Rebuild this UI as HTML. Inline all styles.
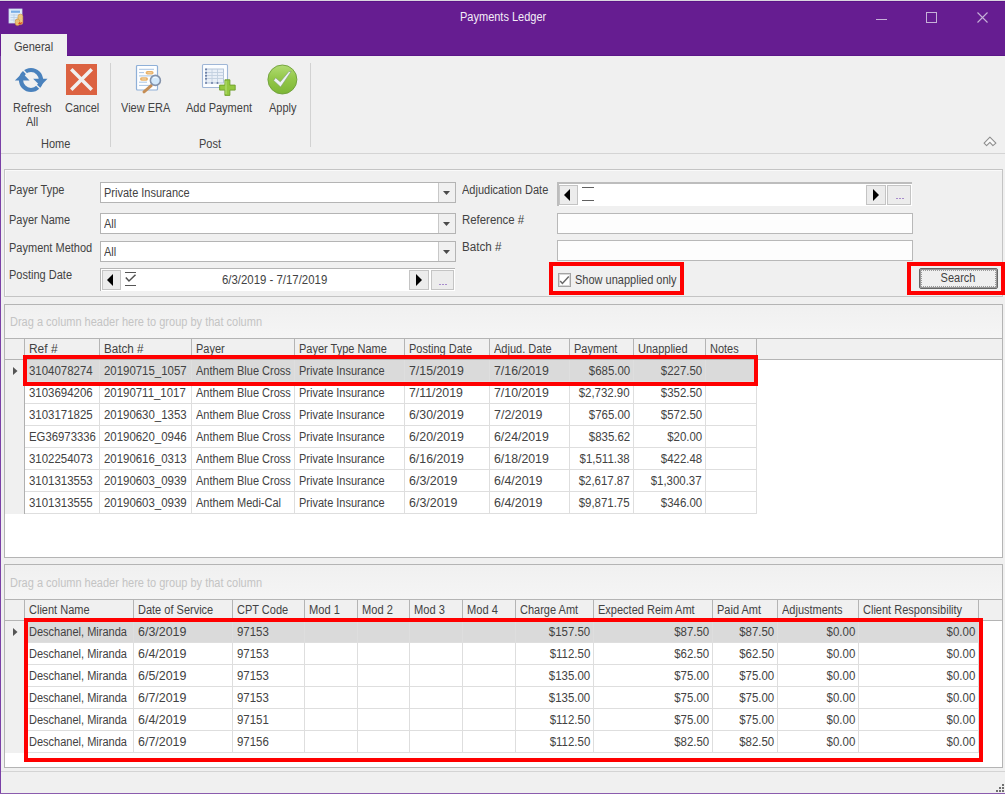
<!DOCTYPE html>
<html><head><meta charset="utf-8"><style>
html,body{margin:0;padding:0;width:1005px;height:794px;overflow:hidden;background:#f0f0f0}
body{position:relative;font-family:"Liberation Sans",sans-serif;font-size:11px}
body>div,body>svg{position:absolute}
.t{white-space:nowrap}
</style></head><body>
<div style="left:0px;top:0px;width:1005px;height:1px;background:#d9d6df"></div>
<div style="left:0px;top:1px;width:1005px;height:55px;background:#661d91"></div>
<div style="left:0px;top:1px;width:1005px;height:1px;background:#5b1486"></div>
<svg style="left:8px;top:8px" width="17" height="19" viewBox="0 0 17 19">
<rect x="1" y="1" width="13" height="14" fill="#e2eefa" stroke="#c9d9ec" stroke-width="0.8"/>
<rect x="3" y="2.6" width="9" height="2.2" fill="#78ade6"/>
<g stroke="#b9cde4" stroke-width="0.8"><line x1="2.5" y1="7" x2="12.5" y2="7"/><line x1="2.5" y1="9.5" x2="12.5" y2="9.5"/><line x1="2.5" y1="12" x2="12.5" y2="12"/><line x1="6" y1="6" x2="6" y2="14"/></g>
<rect x="10" y="6.2" width="4.8" height="10.4" rx="2.2" fill="#f2c67c" stroke="#c99445" stroke-width="0.6"/>
<rect x="7.3" y="11" width="4.4" height="6.6" rx="2" fill="#efbd6c" stroke="#c08a3a" stroke-width="0.6"/>
<g stroke="#d9c08a" stroke-width="0.5"><line x1="10.3" y1="9" x2="14.5" y2="9"/><line x1="10.3" y1="11.5" x2="14.5" y2="11.5"/><line x1="7.6" y1="13.5" x2="11.4" y2="13.5"/></g>
<path d="M10.5 15.8 l1.2 -1 l1 0.8 l1.5 -1.2" stroke="#e04a20" stroke-width="1.1" fill="none"/>
</svg>
<div class="t" style="left:460px;top:11px;font-size:12.5px;line-height:12.5px;transform:scaleX(0.88032);transform-origin:0 0;color:#f4eef8">Payments Ledger</div>
<div style="left:876px;top:19px;width:11px;height:1px;background:#c6b2d8"></div>
<div style="left:926px;top:12px;width:11px;height:11px;border:1px solid #c6b2d8;box-sizing:border-box"></div>
<svg style="left:977px;top:12px" width="11" height="11" viewBox="0 0 11 11"><path d="M0.5 0.5 L10.5 10.5 M10.5 0.5 L0.5 10.5" stroke="#c6b2d8" stroke-width="1.1"/></svg>
<div style="left:67px;top:55px;width:938px;height:1px;background:#5b1688"></div>
<div style="left:1px;top:34px;width:66px;height:22px;background:#f0f0f0"></div>
<div class="t" style="left:14px;top:41px;font-size:12.5px;line-height:12.5px;transform:scaleX(0.88032);transform-origin:0 0;color:#424242">General</div>
<div style="left:1px;top:56px;width:1004px;height:98px;background:#f0f0f0"></div>
<div style="left:1px;top:153px;width:1004px;height:1px;background:#d4d4d4"></div>
<div style="left:110px;top:63px;width:1px;height:84px;background:#d2d2d2"></div>
<div style="left:310px;top:63px;width:1px;height:84px;background:#d2d2d2"></div>
<svg style="left:14px;top:66px" width="34" height="28" viewBox="0 0 34 28">
<path d="M7 14 A10 10 0 0 1 27 14" stroke="#4a82bd" stroke-width="4.2" fill="none"/>
<path d="M7 14 A10 10 0 0 0 27 14" stroke="#4a82bd" stroke-width="4.2" fill="none"/>
<line x1="8.6" y1="3.6" x2="17" y2="12.6" stroke="#f0f0f0" stroke-width="1.4"/>
<line x1="17.5" y1="14.5" x2="26.5" y2="23" stroke="#f0f0f0" stroke-width="1.4"/>
<path d="M0.9 14.5 L8.4 7 L15.6 14.5 Z" fill="#4a82bd"/>
<path d="M19.1 12.7 L33.5 12.7 L26.6 19.9 Z" fill="#4a82bd"/>
</svg>
<div style="left:66px;top:64px;width:31px;height:31px;background:#dc6241"></div>
<svg style="left:66px;top:64px" width="31" height="31" viewBox="0 0 31 31"><path d="M6.5 6.5 L24.5 24.5 M24.5 6.5 L6.5 24.5" stroke="#f0f0f0" stroke-width="3.5" stroke-linecap="square"/></svg>
<div class="t" style="left:13px;top:102px;font-size:12.5px;line-height:12.5px;transform:scaleX(0.88032);transform-origin:0 0;color:#424242">Refresh</div>
<div class="t" style="left:26px;top:116px;font-size:12.5px;line-height:12.5px;transform:scaleX(0.8803200000000001);transform-origin:0 0;color:#424242">All</div>
<div class="t" style="left:65px;top:102px;font-size:12.5px;line-height:12.5px;transform:scaleX(0.8803200000000001);transform-origin:0 0;color:#424242">Cancel</div>
<div class="t" style="left:41px;top:138px;font-size:12.5px;line-height:12.5px;transform:scaleX(0.8803200000000001);transform-origin:0 0;color:#424242">Home</div>
<svg style="left:134px;top:63px" width="32" height="32" viewBox="0 0 32 32">
<rect x="2.5" y="2.5" width="21" height="24.5" rx="1" fill="#fdfeff" stroke="#8fb0d8" stroke-width="1.2"/>
<g stroke="#a9c4e4" stroke-width="1"><line x1="5" y1="6.3" x2="20" y2="6.3"/><line x1="5" y1="9.6" x2="10" y2="9.6"/><line x1="5" y1="12.9" x2="20" y2="12.9"/><line x1="5" y1="19.2" x2="13" y2="19.2"/><line x1="5" y1="22.4" x2="17" y2="22.4"/></g>
<rect x="11.6" y="8" width="8" height="3.6" rx="1.8" fill="#e9b26a"/>
<rect x="6" y="14.3" width="8" height="3.5" rx="1.7" fill="#e9b26a"/>
<g stroke="#f6e2c0" stroke-width="0.8"><line x1="13.5" y1="9.8" x2="17.8" y2="9.8"/><line x1="7.8" y1="16" x2="12" y2="16"/></g>
<line x1="17.2" y1="22.7" x2="10" y2="28.8" stroke="#c58d55" stroke-width="3" stroke-linecap="round"/>
<circle cx="21.4" cy="17.4" r="5" fill="#d2e8fb" stroke="#8492aa" stroke-width="1.6"/>
<path d="M19 15 Q21 13.5 23.5 15" stroke="#f4faff" stroke-width="1" fill="none"/>
</svg>
<div class="t" style="left:121px;top:102px;font-size:12.5px;line-height:12.5px;transform:scaleX(0.8803200000000001);transform-origin:0 0;color:#424242">View ERA</div>
<svg style="left:201px;top:63px" width="36" height="34" viewBox="0 0 36 34">
<rect x="1.5" y="1.5" width="25" height="23" rx="1" fill="#fbfdff" stroke="#9fb6d6" stroke-width="1.1"/>
<rect x="5" y="6" width="17.5" height="14" fill="#e9eff7" stroke="#aebfd6" stroke-width="0.9"/>
<g stroke="#c2cfdf" stroke-width="0.9"><line x1="5" y1="9.5" x2="22.5" y2="9.5"/><line x1="5" y1="12.5" x2="22.5" y2="12.5"/><line x1="5" y1="15.5" x2="22.5" y2="15.5"/><line x1="11" y1="6" x2="11" y2="20"/><line x1="16.5" y1="6" x2="16.5" y2="20"/></g>
<g fill="#5a6f9a"><rect x="4.2" y="5.5" width="1.6" height="1.6"/><rect x="4.2" y="9" width="1.6" height="1.6"/><rect x="4.2" y="12" width="1.6" height="1.6"/><rect x="4.2" y="15" width="1.6" height="1.6"/><rect x="4.2" y="19.2" width="1.6" height="1.6"/><rect x="10.2" y="19.2" width="1.6" height="1.6"/><rect x="15.7" y="19.2" width="1.6" height="1.6"/></g>
<path d="M23.9 16.8 h5 v5.3 h5.3 v5 h-5.3 v5.3 h-5 v-5.3 h-5.3 v-5 h5.3 z" fill="#94c840" stroke="#6f9e2c" stroke-width="0.9"/>
<path d="M25 18 v13" stroke="#b8e07a" stroke-width="1"/>
</svg>
<div class="t" style="left:186px;top:102px;font-size:12.5px;line-height:12.5px;transform:scaleX(0.88032);transform-origin:0 0;color:#424242">Add Payment</div>
<svg style="left:266px;top:64px" width="32" height="32" viewBox="0 0 32 32">
<defs><linearGradient id="ga" x1="0" y1="0" x2="0" y2="1"><stop offset="0" stop-color="#b2dc74"/><stop offset="0.45" stop-color="#94c84a"/><stop offset="1" stop-color="#7cb636"/></linearGradient></defs>
<circle cx="16.4" cy="15.5" r="14.5" fill="url(#ga)" stroke="#6e9e3a" stroke-width="0.9"/>
<path d="M7.6 16.4 L14.6 23 L25.2 7.4 L22.8 7.6 L14.3 17.8 L9.6 13.8 Z" fill="#eef2f6" stroke="#7a9a66" stroke-width="0.6" stroke-linejoin="round"/>
</svg>
<div class="t" style="left:269px;top:102px;font-size:12.5px;line-height:12.5px;transform:scaleX(0.8803200000000001);transform-origin:0 0;color:#424242">Apply</div>
<div class="t" style="left:199px;top:138px;font-size:12.5px;line-height:12.5px;transform:scaleX(0.8803200000000001);transform-origin:0 0;color:#424242">Post</div>
<svg style="left:983px;top:136px" width="14" height="11" viewBox="0 0 14 11"><path d="M1.1 7.1 L6.9 1.1 L12.9 7.1 L9.9 9.6 L6.9 6.4 L3.6 9.6 Z" fill="#f8f8f8" stroke="#8e8e8e" stroke-width="1.1" stroke-linejoin="round"/></svg>
<div style="left:1px;top:154px;width:1004px;height:639px;background:#f0f0f0"></div>
<div style="left:0px;top:56px;width:1px;height:737px;background:#7a40a6"></div>
<div style="left:0px;top:793px;width:1005px;height:1px;background:#8b5cae"></div>
<div style="left:4px;top:169px;width:999px;height:128px;border:1px solid #c4c4c4;box-sizing:border-box;box-shadow:inset 1px 1px 0 #fafafa"></div>
<div class="t" style="left:9px;top:184px;font-size:12.5px;line-height:12.5px;transform:scaleX(0.8803200000000001);transform-origin:0 0;color:#424242">Payer Type</div>
<div class="t" style="left:9px;top:214px;font-size:12.5px;line-height:12.5px;transform:scaleX(0.8803200000000001);transform-origin:0 0;color:#424242">Payer Name</div>
<div class="t" style="left:9px;top:242px;font-size:12.5px;line-height:12.5px;transform:scaleX(0.8803200000000001);transform-origin:0 0;color:#424242">Payment Method</div>
<div class="t" style="left:9px;top:269px;font-size:12.5px;line-height:12.5px;transform:scaleX(0.8803200000000001);transform-origin:0 0;color:#424242">Posting Date</div>
<div class="t" style="left:462px;top:184px;font-size:12.5px;line-height:12.5px;transform:scaleX(0.8803200000000001);transform-origin:0 0;color:#424242">Adjudication Date</div>
<div class="t" style="left:462px;top:214px;font-size:12.5px;line-height:12.5px;transform:scaleX(0.9129556117235816);transform-origin:0 0;color:#424242">Reference #</div>
<div class="t" style="left:462px;top:241px;font-size:12.5px;line-height:12.5px;transform:scaleX(0.9327484406047516);transform-origin:0 0;color:#424242">Batch #</div>
<div style="left:100px;top:182px;width:356px;height:21px;background:#fff;border:1px solid #b4b4b4;box-sizing:border-box"></div>
<div style="left:438px;top:183px;width:1px;height:19px;background:#c8c8c8"></div>
<div style="left:439px;top:183px;width:16px;height:19px;background:#f0f0f0"></div>
<svg style="left:443px;top:191px" width="7" height="4" viewBox="0 0 7 4"><path d="M0 0 H7 L3.5 4 Z" fill="#4a4a4a"/></svg>
<div class="t" style="left:104px;top:187px;font-size:12.5px;line-height:12.5px;transform:scaleX(0.88032);transform-origin:0 0;color:#424242">Private Insurance</div>
<div style="left:100px;top:213px;width:356px;height:21px;background:#fff;border:1px solid #b4b4b4;box-sizing:border-box"></div>
<div style="left:438px;top:214px;width:1px;height:19px;background:#c8c8c8"></div>
<div style="left:439px;top:214px;width:16px;height:19px;background:#f0f0f0"></div>
<svg style="left:443px;top:222px" width="7" height="4" viewBox="0 0 7 4"><path d="M0 0 H7 L3.5 4 Z" fill="#4a4a4a"/></svg>
<div class="t" style="left:104px;top:218px;font-size:12.5px;line-height:12.5px;transform:scaleX(0.8803200000000001);transform-origin:0 0;color:#424242">All</div>
<div style="left:100px;top:241px;width:356px;height:21px;background:#fff;border:1px solid #b4b4b4;box-sizing:border-box"></div>
<div style="left:438px;top:242px;width:1px;height:19px;background:#c8c8c8"></div>
<div style="left:439px;top:242px;width:16px;height:19px;background:#f0f0f0"></div>
<svg style="left:443px;top:250px" width="7" height="4" viewBox="0 0 7 4"><path d="M0 0 H7 L3.5 4 Z" fill="#4a4a4a"/></svg>
<div class="t" style="left:104px;top:246px;font-size:12.5px;line-height:12.5px;transform:scaleX(0.8803200000000001);transform-origin:0 0;color:#424242">All</div>
<div style="left:557px;top:213px;width:356px;height:21px;background:#fdfdfd;border:1px solid #b8b8b8;box-sizing:border-box"></div>
<div style="left:557px;top:240px;width:356px;height:21px;background:#fdfdfd;border:1px solid #b8b8b8;box-sizing:border-box"></div>
<div style="left:557px;top:182px;width:355px;height:24px;background:#fff;border-top:2px solid #bdbdbd;border-left:2px solid #bdbdbd;box-sizing:border-box"></div>
<div style="left:559px;top:185px;width:19px;height:20px;background:#ececec;border:1px solid #c4c4c4;box-sizing:border-box"></div>
<svg style="left:564px;top:189px" width="7" height="12" viewBox="0 0 7 12"><path d="M6 0 V12 L0 6 Z" fill="#000"/></svg>
<div style="left:582px;top:187px;width:12px;height:1px;background:#606060"></div>
<div style="left:582px;top:200px;width:12px;height:1px;background:#606060"></div>
<div style="left:866px;top:185px;width:20px;height:20px;background:#ececec;border:1px solid #c4c4c4;box-sizing:border-box"></div>
<svg style="left:872px;top:189px" width="7" height="12" viewBox="0 0 7 12"><path d="M1 0 V12 L7 6 Z" fill="#000"/></svg>
<div style="left:887px;top:185px;width:24px;height:20px;background:#ececec;border:1px solid #c4c4c4;box-sizing:border-box"></div>
<div style="left:896.0px;top:197.5px;width:1.5px;height:1.5px;background:#a88ccc"></div>
<div style="left:899.2px;top:197.5px;width:1.5px;height:1.5px;background:#a88ccc"></div>
<div style="left:902.4px;top:197.5px;width:1.5px;height:1.5px;background:#a88ccc"></div>
<div style="left:100px;top:268px;width:355px;height:23px;background:#fff;border-top:1px solid #b4b4b4;border-left:1px solid #b4b4b4;box-sizing:border-box"></div>
<div style="left:102px;top:270px;width:19px;height:20px;background:#ececec;border:1px solid #c4c4c4;box-sizing:border-box"></div>
<svg style="left:107px;top:274px" width="7" height="12" viewBox="0 0 7 12"><path d="M6 0 V12 L0 6 Z" fill="#000"/></svg>
<div style="left:125px;top:272px;width:11px;height:1px;background:#555"></div>
<svg style="left:125px;top:274px" width="12" height="9" viewBox="0 0 12 9"><path d="M0.8 3.5 L4 7 L10.5 0.8" stroke="#505050" stroke-width="1.5" fill="none"/></svg>
<div style="left:125px;top:285px;width:11px;height:1px;background:#555"></div>
<div class="t" style="left:222px;top:274px;font-size:12.5px;line-height:12.5px;transform:scaleX(0.9119999999999999);transform-origin:0 0;color:#424242">6/3/2019 - 7/17/2019</div>
<div style="left:409px;top:270px;width:20px;height:20px;background:#ececec;border:1px solid #c4c4c4;box-sizing:border-box"></div>
<svg style="left:415px;top:274px" width="7" height="12" viewBox="0 0 7 12"><path d="M1 0 V12 L7 6 Z" fill="#000"/></svg>
<div style="left:431px;top:270px;width:23px;height:20px;background:#ececec;border:1px solid #c4c4c4;box-sizing:border-box"></div>
<div style="left:439.0px;top:283.5px;width:1.5px;height:1.5px;background:#a88ccc"></div>
<div style="left:442.2px;top:283.5px;width:1.5px;height:1.5px;background:#a88ccc"></div>
<div style="left:445.4px;top:283.5px;width:1.5px;height:1.5px;background:#a88ccc"></div>
<div style="left:558px;top:273px;width:13px;height:14px;background:#fff;border:1px solid #a4a4a4;box-sizing:border-box;box-shadow:inset 0 0 0 1px #d8d8d8"></div>
<svg style="left:558px;top:274px" width="13" height="12" viewBox="0 0 13 12"><path d="M2.2 7 L4.4 9.4 L10.8 2.5" stroke="#6a6a6a" stroke-width="1.5" fill="none"/></svg>
<div class="t" style="left:575px;top:274px;font-size:12.5px;line-height:12.5px;transform:scaleX(0.8803200000000001);transform-origin:0 0;color:#424242">Show unapplied only</div>
<div style="left:919px;top:268px;width:79px;height:21px;background:#efefef;border:1px solid #666;box-sizing:border-box;border-radius:2px;box-shadow:inset 0 0 0 1px #999"></div>
<div style="left:921px;top:270px;width:75px;height:17px;border:1px dotted #9a9a9a;box-sizing:border-box"></div>
<div class="t" style="left:858.0px;width:200px;text-align:center;top:272px;font-size:12.5px;line-height:12.5px;transform:scaleX(0.8803200000000001);transform-origin:50% 0;color:#424242">Search</div>
<div style="left:4px;top:304px;width:999px;height:254px;background:#fff;border:1px solid #b4b4b4;box-sizing:border-box"></div>
<div style="left:5px;top:305px;width:997px;height:33px;background:linear-gradient(#f0f0f0,#f5f5f5)"></div>
<div class="t" style="left:10px;top:316px;font-size:12.5px;line-height:12.5px;transform:scaleX(0.8803200000000001);transform-origin:0 0;color:#c4c4c4">Drag a column header here to group by that column</div>
<div style="left:5px;top:338px;width:997px;height:1px;background:#b4b4b4"></div>
<div style="left:5px;top:339px;width:997px;height:20px;background:#f0f0f0"></div>
<div style="left:5px;top:359px;width:997px;height:1px;background:#b4b4b4"></div>
<div style="left:5px;top:360px;width:19px;height:154px;background:#f0f0f0"></div>
<div style="left:24px;top:339px;width:1px;height:20px;background:#b4b4b4"></div>
<div style="left:24px;top:360px;width:1px;height:154px;background:#b0b0b0"></div>
<div style="left:99px;top:339px;width:1px;height:20px;background:#b4b4b4"></div>
<div class="t" style="left:29px;top:343px;font-size:12.5px;line-height:12.5px;transform:scaleX(0.9547051930541369);transform-origin:0 0;color:#424242">Ref #</div>
<div style="left:191px;top:339px;width:1px;height:20px;background:#b4b4b4"></div>
<div class="t" style="left:104px;top:343px;font-size:12.5px;line-height:12.5px;transform:scaleX(0.9327484406047516);transform-origin:0 0;color:#424242">Batch #</div>
<div style="left:294px;top:339px;width:1px;height:20px;background:#b4b4b4"></div>
<div class="t" style="left:196px;top:343px;font-size:12.5px;line-height:12.5px;transform:scaleX(0.88032);transform-origin:0 0;color:#424242">Payer</div>
<div style="left:404px;top:339px;width:1px;height:20px;background:#b4b4b4"></div>
<div class="t" style="left:299px;top:343px;font-size:12.5px;line-height:12.5px;transform:scaleX(0.88032);transform-origin:0 0;color:#424242">Payer Type Name</div>
<div style="left:489px;top:339px;width:1px;height:20px;background:#b4b4b4"></div>
<div class="t" style="left:409px;top:343px;font-size:12.5px;line-height:12.5px;transform:scaleX(0.8803200000000001);transform-origin:0 0;color:#424242">Posting Date</div>
<div style="left:569px;top:339px;width:1px;height:20px;background:#b4b4b4"></div>
<div class="t" style="left:494px;top:343px;font-size:12.5px;line-height:12.5px;transform:scaleX(0.8820043505886751);transform-origin:0 0;color:#424242">Adjud. Date</div>
<div style="left:633px;top:339px;width:1px;height:20px;background:#b4b4b4"></div>
<div class="t" style="left:574px;top:343px;font-size:12.5px;line-height:12.5px;transform:scaleX(0.8803200000000001);transform-origin:0 0;color:#424242">Payment</div>
<div style="left:705px;top:339px;width:1px;height:20px;background:#b4b4b4"></div>
<div class="t" style="left:638px;top:343px;font-size:12.5px;line-height:12.5px;transform:scaleX(0.8803200000000001);transform-origin:0 0;color:#424242">Unapplied</div>
<div style="left:756px;top:339px;width:1px;height:20px;background:#b4b4b4"></div>
<div class="t" style="left:710px;top:343px;font-size:12.5px;line-height:12.5px;transform:scaleX(0.88032);transform-origin:0 0;color:#424242">Notes</div>
<div style="left:25px;top:360px;width:731px;height:21px;background:#dadada"></div>
<div style="left:25px;top:381px;width:732px;height:1px;background:#dedede"></div>
<div style="left:99px;top:360px;width:1px;height:22px;background:#dedede"></div>
<div class="t" style="left:29px;top:365px;font-size:12.5px;line-height:12.5px;transform:scaleX(0.9167999999999998);transform-origin:0 0;color:#424242">3104078274</div>
<div style="left:191px;top:360px;width:1px;height:22px;background:#dedede"></div>
<div class="t" style="left:104px;top:365px;font-size:12.5px;line-height:12.5px;transform:scaleX(0.913993846153846);transform-origin:0 0;color:#424242">20190715_1057</div>
<div style="left:294px;top:360px;width:1px;height:22px;background:#dedede"></div>
<div class="t" style="left:196px;top:365px;font-size:12.5px;line-height:12.5px;transform:scaleX(0.8803200000000001);transform-origin:0 0;color:#424242">Anthem Blue Cross</div>
<div style="left:404px;top:360px;width:1px;height:22px;background:#dedede"></div>
<div class="t" style="left:299px;top:365px;font-size:12.5px;line-height:12.5px;transform:scaleX(0.88032);transform-origin:0 0;color:#424242">Private Insurance</div>
<div style="left:489px;top:360px;width:1px;height:22px;background:#dedede"></div>
<div class="t" style="left:409px;top:365px;font-size:12.5px;line-height:12.5px;transform:scaleX(0.9857469871583799);transform-origin:0 0;color:#424242">7/15/2019</div>
<div style="left:569px;top:360px;width:1px;height:22px;background:#dedede"></div>
<div class="t" style="left:494px;top:365px;font-size:12.5px;line-height:12.5px;transform:scaleX(0.9857469871583799);transform-origin:0 0;color:#424242">7/16/2019</div>
<div style="left:633px;top:360px;width:1px;height:22px;background:#dedede"></div>
<div class="t" style="right:375px;top:365px;font-size:12.5px;line-height:12.5px;transform:scaleX(0.9164310684857491);transform-origin:100% 0;color:#424242">$685.00</div>
<div style="left:705px;top:360px;width:1px;height:22px;background:#dedede"></div>
<div class="t" style="right:303px;top:365px;font-size:12.5px;line-height:12.5px;transform:scaleX(0.9164310684857491);transform-origin:100% 0;color:#424242">$227.50</div>
<div style="left:756px;top:360px;width:1px;height:22px;background:#dedede"></div>
<div style="left:25px;top:403px;width:732px;height:1px;background:#dedede"></div>
<div style="left:99px;top:382px;width:1px;height:22px;background:#dedede"></div>
<div class="t" style="left:29px;top:387px;font-size:12.5px;line-height:12.5px;transform:scaleX(0.9167999999999998);transform-origin:0 0;color:#424242">3103694206</div>
<div style="left:191px;top:382px;width:1px;height:22px;background:#dedede"></div>
<div class="t" style="left:104px;top:387px;font-size:12.5px;line-height:12.5px;transform:scaleX(0.913993846153846);transform-origin:0 0;color:#424242">20190711_1017</div>
<div style="left:294px;top:382px;width:1px;height:22px;background:#dedede"></div>
<div class="t" style="left:196px;top:387px;font-size:12.5px;line-height:12.5px;transform:scaleX(0.8803200000000001);transform-origin:0 0;color:#424242">Anthem Blue Cross</div>
<div style="left:404px;top:382px;width:1px;height:22px;background:#dedede"></div>
<div class="t" style="left:299px;top:387px;font-size:12.5px;line-height:12.5px;transform:scaleX(0.88032);transform-origin:0 0;color:#424242">Private Insurance</div>
<div style="left:489px;top:382px;width:1px;height:22px;background:#dedede"></div>
<div class="t" style="left:409px;top:387px;font-size:12.5px;line-height:12.5px;transform:scaleX(0.9857469871583799);transform-origin:0 0;color:#424242">7/11/2019</div>
<div style="left:569px;top:382px;width:1px;height:22px;background:#dedede"></div>
<div class="t" style="left:494px;top:387px;font-size:12.5px;line-height:12.5px;transform:scaleX(0.9857469871583799);transform-origin:0 0;color:#424242">7/10/2019</div>
<div style="left:633px;top:382px;width:1px;height:22px;background:#dedede"></div>
<div class="t" style="right:375px;top:387px;font-size:12.5px;line-height:12.5px;transform:scaleX(0.9162004609812313);transform-origin:100% 0;color:#424242">$2,732.90</div>
<div style="left:705px;top:382px;width:1px;height:22px;background:#dedede"></div>
<div class="t" style="right:303px;top:387px;font-size:12.5px;line-height:12.5px;transform:scaleX(0.9164310684857491);transform-origin:100% 0;color:#424242">$352.50</div>
<div style="left:756px;top:382px;width:1px;height:22px;background:#dedede"></div>
<div style="left:25px;top:425px;width:732px;height:1px;background:#dedede"></div>
<div style="left:99px;top:404px;width:1px;height:22px;background:#dedede"></div>
<div class="t" style="left:29px;top:409px;font-size:12.5px;line-height:12.5px;transform:scaleX(0.9167999999999998);transform-origin:0 0;color:#424242">3103171825</div>
<div style="left:191px;top:404px;width:1px;height:22px;background:#dedede"></div>
<div class="t" style="left:104px;top:409px;font-size:12.5px;line-height:12.5px;transform:scaleX(0.913993846153846);transform-origin:0 0;color:#424242">20190630_1353</div>
<div style="left:294px;top:404px;width:1px;height:22px;background:#dedede"></div>
<div class="t" style="left:196px;top:409px;font-size:12.5px;line-height:12.5px;transform:scaleX(0.8803200000000001);transform-origin:0 0;color:#424242">Anthem Blue Cross</div>
<div style="left:404px;top:404px;width:1px;height:22px;background:#dedede"></div>
<div class="t" style="left:299px;top:409px;font-size:12.5px;line-height:12.5px;transform:scaleX(0.88032);transform-origin:0 0;color:#424242">Private Insurance</div>
<div style="left:489px;top:404px;width:1px;height:22px;background:#dedede"></div>
<div class="t" style="left:409px;top:409px;font-size:12.5px;line-height:12.5px;transform:scaleX(0.9857469871583799);transform-origin:0 0;color:#424242">6/30/2019</div>
<div style="left:569px;top:404px;width:1px;height:22px;background:#dedede"></div>
<div class="t" style="left:494px;top:409px;font-size:12.5px;line-height:12.5px;transform:scaleX(0.9955977922729552);transform-origin:0 0;color:#424242">7/2/2019</div>
<div style="left:633px;top:404px;width:1px;height:22px;background:#dedede"></div>
<div class="t" style="right:375px;top:409px;font-size:12.5px;line-height:12.5px;transform:scaleX(0.9164310684857491);transform-origin:100% 0;color:#424242">$765.00</div>
<div style="left:705px;top:404px;width:1px;height:22px;background:#dedede"></div>
<div class="t" style="right:303px;top:409px;font-size:12.5px;line-height:12.5px;transform:scaleX(0.9164310684857491);transform-origin:100% 0;color:#424242">$572.50</div>
<div style="left:756px;top:404px;width:1px;height:22px;background:#dedede"></div>
<div style="left:25px;top:447px;width:732px;height:1px;background:#dedede"></div>
<div style="left:99px;top:426px;width:1px;height:22px;background:#dedede"></div>
<div class="t" style="left:29px;top:431px;font-size:12.5px;line-height:12.5px;transform:scaleX(0.9078575494987987);transform-origin:0 0;color:#424242">EG36973336</div>
<div style="left:191px;top:426px;width:1px;height:22px;background:#dedede"></div>
<div class="t" style="left:104px;top:431px;font-size:12.5px;line-height:12.5px;transform:scaleX(0.913993846153846);transform-origin:0 0;color:#424242">20190620_0946</div>
<div style="left:294px;top:426px;width:1px;height:22px;background:#dedede"></div>
<div class="t" style="left:196px;top:431px;font-size:12.5px;line-height:12.5px;transform:scaleX(0.8803200000000001);transform-origin:0 0;color:#424242">Anthem Blue Cross</div>
<div style="left:404px;top:426px;width:1px;height:22px;background:#dedede"></div>
<div class="t" style="left:299px;top:431px;font-size:12.5px;line-height:12.5px;transform:scaleX(0.88032);transform-origin:0 0;color:#424242">Private Insurance</div>
<div style="left:489px;top:426px;width:1px;height:22px;background:#dedede"></div>
<div class="t" style="left:409px;top:431px;font-size:12.5px;line-height:12.5px;transform:scaleX(0.9857469871583799);transform-origin:0 0;color:#424242">6/20/2019</div>
<div style="left:569px;top:426px;width:1px;height:22px;background:#dedede"></div>
<div class="t" style="left:494px;top:431px;font-size:12.5px;line-height:12.5px;transform:scaleX(0.9857469871583799);transform-origin:0 0;color:#424242">6/24/2019</div>
<div style="left:633px;top:426px;width:1px;height:22px;background:#dedede"></div>
<div class="t" style="right:375px;top:431px;font-size:12.5px;line-height:12.5px;transform:scaleX(0.9164310684857491);transform-origin:100% 0;color:#424242">$835.62</div>
<div style="left:705px;top:426px;width:1px;height:22px;background:#dedede"></div>
<div class="t" style="right:303px;top:431px;font-size:12.5px;line-height:12.5px;transform:scaleX(0.9163639846743294);transform-origin:100% 0;color:#424242">$20.00</div>
<div style="left:756px;top:426px;width:1px;height:22px;background:#dedede"></div>
<div style="left:25px;top:469px;width:732px;height:1px;background:#dedede"></div>
<div style="left:99px;top:448px;width:1px;height:22px;background:#dedede"></div>
<div class="t" style="left:29px;top:453px;font-size:12.5px;line-height:12.5px;transform:scaleX(0.9167999999999998);transform-origin:0 0;color:#424242">3102254073</div>
<div style="left:191px;top:448px;width:1px;height:22px;background:#dedede"></div>
<div class="t" style="left:104px;top:453px;font-size:12.5px;line-height:12.5px;transform:scaleX(0.913993846153846);transform-origin:0 0;color:#424242">20190616_0313</div>
<div style="left:294px;top:448px;width:1px;height:22px;background:#dedede"></div>
<div class="t" style="left:196px;top:453px;font-size:12.5px;line-height:12.5px;transform:scaleX(0.8803200000000001);transform-origin:0 0;color:#424242">Anthem Blue Cross</div>
<div style="left:404px;top:448px;width:1px;height:22px;background:#dedede"></div>
<div class="t" style="left:299px;top:453px;font-size:12.5px;line-height:12.5px;transform:scaleX(0.88032);transform-origin:0 0;color:#424242">Private Insurance</div>
<div style="left:489px;top:448px;width:1px;height:22px;background:#dedede"></div>
<div class="t" style="left:409px;top:453px;font-size:12.5px;line-height:12.5px;transform:scaleX(0.9857469871583799);transform-origin:0 0;color:#424242">6/16/2019</div>
<div style="left:569px;top:448px;width:1px;height:22px;background:#dedede"></div>
<div class="t" style="left:494px;top:453px;font-size:12.5px;line-height:12.5px;transform:scaleX(0.9857469871583799);transform-origin:0 0;color:#424242">6/18/2019</div>
<div style="left:633px;top:448px;width:1px;height:22px;background:#dedede"></div>
<div class="t" style="right:375px;top:453px;font-size:12.5px;line-height:12.5px;transform:scaleX(0.9162004609812313);transform-origin:100% 0;color:#424242">$1,511.38</div>
<div style="left:705px;top:448px;width:1px;height:22px;background:#dedede"></div>
<div class="t" style="right:303px;top:453px;font-size:12.5px;line-height:12.5px;transform:scaleX(0.9164310684857491);transform-origin:100% 0;color:#424242">$422.48</div>
<div style="left:756px;top:448px;width:1px;height:22px;background:#dedede"></div>
<div style="left:25px;top:491px;width:732px;height:1px;background:#dedede"></div>
<div style="left:99px;top:470px;width:1px;height:22px;background:#dedede"></div>
<div class="t" style="left:29px;top:475px;font-size:12.5px;line-height:12.5px;transform:scaleX(0.9167999999999998);transform-origin:0 0;color:#424242">3101313553</div>
<div style="left:191px;top:470px;width:1px;height:22px;background:#dedede"></div>
<div class="t" style="left:104px;top:475px;font-size:12.5px;line-height:12.5px;transform:scaleX(0.913993846153846);transform-origin:0 0;color:#424242">20190603_0939</div>
<div style="left:294px;top:470px;width:1px;height:22px;background:#dedede"></div>
<div class="t" style="left:196px;top:475px;font-size:12.5px;line-height:12.5px;transform:scaleX(0.8803200000000001);transform-origin:0 0;color:#424242">Anthem Blue Cross</div>
<div style="left:404px;top:470px;width:1px;height:22px;background:#dedede"></div>
<div class="t" style="left:299px;top:475px;font-size:12.5px;line-height:12.5px;transform:scaleX(0.88032);transform-origin:0 0;color:#424242">Private Insurance</div>
<div style="left:489px;top:470px;width:1px;height:22px;background:#dedede"></div>
<div class="t" style="left:409px;top:475px;font-size:12.5px;line-height:12.5px;transform:scaleX(0.9955977922729552);transform-origin:0 0;color:#424242">6/3/2019</div>
<div style="left:569px;top:470px;width:1px;height:22px;background:#dedede"></div>
<div class="t" style="left:494px;top:475px;font-size:12.5px;line-height:12.5px;transform:scaleX(0.9955977922729552);transform-origin:0 0;color:#424242">6/4/2019</div>
<div style="left:633px;top:470px;width:1px;height:22px;background:#dedede"></div>
<div class="t" style="right:375px;top:475px;font-size:12.5px;line-height:12.5px;transform:scaleX(0.9162004609812313);transform-origin:100% 0;color:#424242">$2,617.87</div>
<div style="left:705px;top:470px;width:1px;height:22px;background:#dedede"></div>
<div class="t" style="right:303px;top:475px;font-size:12.5px;line-height:12.5px;transform:scaleX(0.9162004609812313);transform-origin:100% 0;color:#424242">$1,300.37</div>
<div style="left:756px;top:470px;width:1px;height:22px;background:#dedede"></div>
<div style="left:25px;top:513px;width:732px;height:1px;background:#dedede"></div>
<div style="left:99px;top:492px;width:1px;height:22px;background:#dedede"></div>
<div class="t" style="left:29px;top:497px;font-size:12.5px;line-height:12.5px;transform:scaleX(0.9167999999999998);transform-origin:0 0;color:#424242">3101313555</div>
<div style="left:191px;top:492px;width:1px;height:22px;background:#dedede"></div>
<div class="t" style="left:104px;top:497px;font-size:12.5px;line-height:12.5px;transform:scaleX(0.913993846153846);transform-origin:0 0;color:#424242">20190603_0939</div>
<div style="left:294px;top:492px;width:1px;height:22px;background:#dedede"></div>
<div class="t" style="left:196px;top:497px;font-size:12.5px;line-height:12.5px;transform:scaleX(0.8803200000000001);transform-origin:0 0;color:#424242">Anthem Medi-Cal</div>
<div style="left:404px;top:492px;width:1px;height:22px;background:#dedede"></div>
<div class="t" style="left:299px;top:497px;font-size:12.5px;line-height:12.5px;transform:scaleX(0.88032);transform-origin:0 0;color:#424242">Private Insurance</div>
<div style="left:489px;top:492px;width:1px;height:22px;background:#dedede"></div>
<div class="t" style="left:409px;top:497px;font-size:12.5px;line-height:12.5px;transform:scaleX(0.9955977922729552);transform-origin:0 0;color:#424242">6/3/2019</div>
<div style="left:569px;top:492px;width:1px;height:22px;background:#dedede"></div>
<div class="t" style="left:494px;top:497px;font-size:12.5px;line-height:12.5px;transform:scaleX(0.9955977922729552);transform-origin:0 0;color:#424242">6/4/2019</div>
<div style="left:633px;top:492px;width:1px;height:22px;background:#dedede"></div>
<div class="t" style="right:375px;top:497px;font-size:12.5px;line-height:12.5px;transform:scaleX(0.9162004609812313);transform-origin:100% 0;color:#424242">$9,871.75</div>
<div style="left:705px;top:492px;width:1px;height:22px;background:#dedede"></div>
<div class="t" style="right:303px;top:497px;font-size:12.5px;line-height:12.5px;transform:scaleX(0.9164310684857491);transform-origin:100% 0;color:#424242">$346.00</div>
<div style="left:756px;top:492px;width:1px;height:22px;background:#dedede"></div>
<svg style="left:13px;top:367px" width="5" height="8" viewBox="0 0 5 8"><path d="M0 0 L4.5 4 L0 8 Z" fill="#555"/></svg>
<div style="left:4px;top:564px;width:999px;height:204px;background:#fff;border:1px solid #b4b4b4;box-sizing:border-box"></div>
<div style="left:5px;top:565px;width:997px;height:34px;background:linear-gradient(#f0f0f0,#f5f5f5)"></div>
<div class="t" style="left:10px;top:577px;font-size:12.5px;line-height:12.5px;transform:scaleX(0.8803200000000001);transform-origin:0 0;color:#c4c4c4">Drag a column header here to group by that column</div>
<div style="left:5px;top:599px;width:997px;height:1px;background:#b4b4b4"></div>
<div style="left:5px;top:600px;width:997px;height:20px;background:#f0f0f0"></div>
<div style="left:5px;top:620px;width:997px;height:1px;background:#b4b4b4"></div>
<div style="left:5px;top:621px;width:19px;height:132px;background:#f0f0f0"></div>
<div style="left:24px;top:600px;width:1px;height:20px;background:#b4b4b4"></div>
<div style="left:24px;top:621px;width:1px;height:132px;background:#b0b0b0"></div>
<div style="left:133px;top:600px;width:1px;height:20px;background:#b4b4b4"></div>
<div class="t" style="left:29px;top:604px;font-size:12.5px;line-height:12.5px;transform:scaleX(0.8803200000000001);transform-origin:0 0;color:#424242">Client Name</div>
<div style="left:232px;top:600px;width:1px;height:20px;background:#b4b4b4"></div>
<div class="t" style="left:138px;top:604px;font-size:12.5px;line-height:12.5px;transform:scaleX(0.88032);transform-origin:0 0;color:#424242">Date of Service</div>
<div style="left:304px;top:600px;width:1px;height:20px;background:#b4b4b4"></div>
<div class="t" style="left:237px;top:604px;font-size:12.5px;line-height:12.5px;transform:scaleX(0.8803200000000001);transform-origin:0 0;color:#424242">CPT Code</div>
<div style="left:357px;top:600px;width:1px;height:20px;background:#b4b4b4"></div>
<div class="t" style="left:309px;top:604px;font-size:12.5px;line-height:12.5px;transform:scaleX(0.8876198453970484);transform-origin:0 0;color:#424242">Mod 1</div>
<div style="left:409px;top:600px;width:1px;height:20px;background:#b4b4b4"></div>
<div class="t" style="left:362px;top:604px;font-size:12.5px;line-height:12.5px;transform:scaleX(0.8876198453970484);transform-origin:0 0;color:#424242">Mod 2</div>
<div style="left:462px;top:600px;width:1px;height:20px;background:#b4b4b4"></div>
<div class="t" style="left:414px;top:604px;font-size:12.5px;line-height:12.5px;transform:scaleX(0.8876198453970484);transform-origin:0 0;color:#424242">Mod 3</div>
<div style="left:515px;top:600px;width:1px;height:20px;background:#b4b4b4"></div>
<div class="t" style="left:467px;top:604px;font-size:12.5px;line-height:12.5px;transform:scaleX(0.8876198453970484);transform-origin:0 0;color:#424242">Mod 4</div>
<div style="left:593px;top:600px;width:1px;height:20px;background:#b4b4b4"></div>
<div class="t" style="left:520px;top:604px;font-size:12.5px;line-height:12.5px;transform:scaleX(0.8803200000000001);transform-origin:0 0;color:#424242">Charge Amt</div>
<div style="left:712px;top:600px;width:1px;height:20px;background:#b4b4b4"></div>
<div class="t" style="left:598px;top:604px;font-size:12.5px;line-height:12.5px;transform:scaleX(0.8803200000000001);transform-origin:0 0;color:#424242">Expected Reim Amt</div>
<div style="left:777px;top:600px;width:1px;height:20px;background:#b4b4b4"></div>
<div class="t" style="left:717px;top:604px;font-size:12.5px;line-height:12.5px;transform:scaleX(0.8803200000000001);transform-origin:0 0;color:#424242">Paid Amt</div>
<div style="left:858px;top:600px;width:1px;height:20px;background:#b4b4b4"></div>
<div class="t" style="left:782px;top:604px;font-size:12.5px;line-height:12.5px;transform:scaleX(0.8803200000000001);transform-origin:0 0;color:#424242">Adjustments</div>
<div style="left:978px;top:600px;width:1px;height:20px;background:#b4b4b4"></div>
<div class="t" style="left:863px;top:604px;font-size:12.5px;line-height:12.5px;transform:scaleX(0.88032);transform-origin:0 0;color:#424242">Client Responsibility</div>
<div style="left:25px;top:621px;width:953px;height:21px;background:#dadada"></div>
<div style="left:25px;top:642px;width:954px;height:1px;background:#dedede"></div>
<div style="left:133px;top:621px;width:1px;height:22px;background:#dedede"></div>
<div class="t" style="left:29px;top:626px;font-size:12.5px;line-height:12.5px;transform:scaleX(0.8813096738772372);transform-origin:0 0;color:#424242">Deschanel, Miranda</div>
<div style="left:232px;top:621px;width:1px;height:22px;background:#dedede"></div>
<div class="t" style="left:138px;top:626px;font-size:12.5px;line-height:12.5px;transform:scaleX(0.9955977922729552);transform-origin:0 0;color:#424242">6/3/2019</div>
<div style="left:304px;top:621px;width:1px;height:22px;background:#dedede"></div>
<div class="t" style="left:237px;top:626px;font-size:12.5px;line-height:12.5px;transform:scaleX(0.9167999999999998);transform-origin:0 0;color:#424242">97153</div>
<div style="left:357px;top:621px;width:1px;height:22px;background:#dedede"></div>
<div style="left:409px;top:621px;width:1px;height:22px;background:#dedede"></div>
<div style="left:462px;top:621px;width:1px;height:22px;background:#dedede"></div>
<div style="left:515px;top:621px;width:1px;height:22px;background:#dedede"></div>
<div style="left:593px;top:621px;width:1px;height:22px;background:#dedede"></div>
<div class="t" style="right:415px;top:626px;font-size:12.5px;line-height:12.5px;transform:scaleX(0.9164310684857491);transform-origin:100% 0;color:#424242">$157.50</div>
<div style="left:712px;top:621px;width:1px;height:22px;background:#dedede"></div>
<div class="t" style="right:296px;top:626px;font-size:12.5px;line-height:12.5px;transform:scaleX(0.9163639846743294);transform-origin:100% 0;color:#424242">$87.50</div>
<div style="left:777px;top:621px;width:1px;height:22px;background:#dedede"></div>
<div class="t" style="right:231px;top:626px;font-size:12.5px;line-height:12.5px;transform:scaleX(0.9163639846743294);transform-origin:100% 0;color:#424242">$87.50</div>
<div style="left:858px;top:621px;width:1px;height:22px;background:#dedede"></div>
<div class="t" style="right:150px;top:626px;font-size:12.5px;line-height:12.5px;transform:scaleX(0.9162670829268292);transform-origin:100% 0;color:#424242">$0.00</div>
<div style="left:978px;top:621px;width:1px;height:22px;background:#dedede"></div>
<div class="t" style="right:30px;top:626px;font-size:12.5px;line-height:12.5px;transform:scaleX(0.9162670829268292);transform-origin:100% 0;color:#424242">$0.00</div>
<div style="left:25px;top:664px;width:954px;height:1px;background:#dedede"></div>
<div style="left:133px;top:643px;width:1px;height:22px;background:#dedede"></div>
<div class="t" style="left:29px;top:648px;font-size:12.5px;line-height:12.5px;transform:scaleX(0.8813096738772372);transform-origin:0 0;color:#424242">Deschanel, Miranda</div>
<div style="left:232px;top:643px;width:1px;height:22px;background:#dedede"></div>
<div class="t" style="left:138px;top:648px;font-size:12.5px;line-height:12.5px;transform:scaleX(0.9955977922729552);transform-origin:0 0;color:#424242">6/4/2019</div>
<div style="left:304px;top:643px;width:1px;height:22px;background:#dedede"></div>
<div class="t" style="left:237px;top:648px;font-size:12.5px;line-height:12.5px;transform:scaleX(0.9167999999999998);transform-origin:0 0;color:#424242">97153</div>
<div style="left:357px;top:643px;width:1px;height:22px;background:#dedede"></div>
<div style="left:409px;top:643px;width:1px;height:22px;background:#dedede"></div>
<div style="left:462px;top:643px;width:1px;height:22px;background:#dedede"></div>
<div style="left:515px;top:643px;width:1px;height:22px;background:#dedede"></div>
<div style="left:593px;top:643px;width:1px;height:22px;background:#dedede"></div>
<div class="t" style="right:415px;top:648px;font-size:12.5px;line-height:12.5px;transform:scaleX(0.9164310684857491);transform-origin:100% 0;color:#424242">$112.50</div>
<div style="left:712px;top:643px;width:1px;height:22px;background:#dedede"></div>
<div class="t" style="right:296px;top:648px;font-size:12.5px;line-height:12.5px;transform:scaleX(0.9163639846743294);transform-origin:100% 0;color:#424242">$62.50</div>
<div style="left:777px;top:643px;width:1px;height:22px;background:#dedede"></div>
<div class="t" style="right:231px;top:648px;font-size:12.5px;line-height:12.5px;transform:scaleX(0.9163639846743294);transform-origin:100% 0;color:#424242">$62.50</div>
<div style="left:858px;top:643px;width:1px;height:22px;background:#dedede"></div>
<div class="t" style="right:150px;top:648px;font-size:12.5px;line-height:12.5px;transform:scaleX(0.9162670829268292);transform-origin:100% 0;color:#424242">$0.00</div>
<div style="left:978px;top:643px;width:1px;height:22px;background:#dedede"></div>
<div class="t" style="right:30px;top:648px;font-size:12.5px;line-height:12.5px;transform:scaleX(0.9162670829268292);transform-origin:100% 0;color:#424242">$0.00</div>
<div style="left:25px;top:686px;width:954px;height:1px;background:#dedede"></div>
<div style="left:133px;top:665px;width:1px;height:22px;background:#dedede"></div>
<div class="t" style="left:29px;top:670px;font-size:12.5px;line-height:12.5px;transform:scaleX(0.8813096738772372);transform-origin:0 0;color:#424242">Deschanel, Miranda</div>
<div style="left:232px;top:665px;width:1px;height:22px;background:#dedede"></div>
<div class="t" style="left:138px;top:670px;font-size:12.5px;line-height:12.5px;transform:scaleX(0.9955977922729552);transform-origin:0 0;color:#424242">6/5/2019</div>
<div style="left:304px;top:665px;width:1px;height:22px;background:#dedede"></div>
<div class="t" style="left:237px;top:670px;font-size:12.5px;line-height:12.5px;transform:scaleX(0.9167999999999998);transform-origin:0 0;color:#424242">97153</div>
<div style="left:357px;top:665px;width:1px;height:22px;background:#dedede"></div>
<div style="left:409px;top:665px;width:1px;height:22px;background:#dedede"></div>
<div style="left:462px;top:665px;width:1px;height:22px;background:#dedede"></div>
<div style="left:515px;top:665px;width:1px;height:22px;background:#dedede"></div>
<div style="left:593px;top:665px;width:1px;height:22px;background:#dedede"></div>
<div class="t" style="right:415px;top:670px;font-size:12.5px;line-height:12.5px;transform:scaleX(0.9164310684857491);transform-origin:100% 0;color:#424242">$135.00</div>
<div style="left:712px;top:665px;width:1px;height:22px;background:#dedede"></div>
<div class="t" style="right:296px;top:670px;font-size:12.5px;line-height:12.5px;transform:scaleX(0.9163639846743294);transform-origin:100% 0;color:#424242">$75.00</div>
<div style="left:777px;top:665px;width:1px;height:22px;background:#dedede"></div>
<div class="t" style="right:231px;top:670px;font-size:12.5px;line-height:12.5px;transform:scaleX(0.9163639846743294);transform-origin:100% 0;color:#424242">$75.00</div>
<div style="left:858px;top:665px;width:1px;height:22px;background:#dedede"></div>
<div class="t" style="right:150px;top:670px;font-size:12.5px;line-height:12.5px;transform:scaleX(0.9162670829268292);transform-origin:100% 0;color:#424242">$0.00</div>
<div style="left:978px;top:665px;width:1px;height:22px;background:#dedede"></div>
<div class="t" style="right:30px;top:670px;font-size:12.5px;line-height:12.5px;transform:scaleX(0.9162670829268292);transform-origin:100% 0;color:#424242">$0.00</div>
<div style="left:25px;top:708px;width:954px;height:1px;background:#dedede"></div>
<div style="left:133px;top:687px;width:1px;height:22px;background:#dedede"></div>
<div class="t" style="left:29px;top:692px;font-size:12.5px;line-height:12.5px;transform:scaleX(0.8813096738772372);transform-origin:0 0;color:#424242">Deschanel, Miranda</div>
<div style="left:232px;top:687px;width:1px;height:22px;background:#dedede"></div>
<div class="t" style="left:138px;top:692px;font-size:12.5px;line-height:12.5px;transform:scaleX(0.9955977922729552);transform-origin:0 0;color:#424242">6/7/2019</div>
<div style="left:304px;top:687px;width:1px;height:22px;background:#dedede"></div>
<div class="t" style="left:237px;top:692px;font-size:12.5px;line-height:12.5px;transform:scaleX(0.9167999999999998);transform-origin:0 0;color:#424242">97153</div>
<div style="left:357px;top:687px;width:1px;height:22px;background:#dedede"></div>
<div style="left:409px;top:687px;width:1px;height:22px;background:#dedede"></div>
<div style="left:462px;top:687px;width:1px;height:22px;background:#dedede"></div>
<div style="left:515px;top:687px;width:1px;height:22px;background:#dedede"></div>
<div style="left:593px;top:687px;width:1px;height:22px;background:#dedede"></div>
<div class="t" style="right:415px;top:692px;font-size:12.5px;line-height:12.5px;transform:scaleX(0.9164310684857491);transform-origin:100% 0;color:#424242">$135.00</div>
<div style="left:712px;top:687px;width:1px;height:22px;background:#dedede"></div>
<div class="t" style="right:296px;top:692px;font-size:12.5px;line-height:12.5px;transform:scaleX(0.9163639846743294);transform-origin:100% 0;color:#424242">$75.00</div>
<div style="left:777px;top:687px;width:1px;height:22px;background:#dedede"></div>
<div class="t" style="right:231px;top:692px;font-size:12.5px;line-height:12.5px;transform:scaleX(0.9163639846743294);transform-origin:100% 0;color:#424242">$75.00</div>
<div style="left:858px;top:687px;width:1px;height:22px;background:#dedede"></div>
<div class="t" style="right:150px;top:692px;font-size:12.5px;line-height:12.5px;transform:scaleX(0.9162670829268292);transform-origin:100% 0;color:#424242">$0.00</div>
<div style="left:978px;top:687px;width:1px;height:22px;background:#dedede"></div>
<div class="t" style="right:30px;top:692px;font-size:12.5px;line-height:12.5px;transform:scaleX(0.9162670829268292);transform-origin:100% 0;color:#424242">$0.00</div>
<div style="left:25px;top:730px;width:954px;height:1px;background:#dedede"></div>
<div style="left:133px;top:709px;width:1px;height:22px;background:#dedede"></div>
<div class="t" style="left:29px;top:714px;font-size:12.5px;line-height:12.5px;transform:scaleX(0.8813096738772372);transform-origin:0 0;color:#424242">Deschanel, Miranda</div>
<div style="left:232px;top:709px;width:1px;height:22px;background:#dedede"></div>
<div class="t" style="left:138px;top:714px;font-size:12.5px;line-height:12.5px;transform:scaleX(0.9955977922729552);transform-origin:0 0;color:#424242">6/4/2019</div>
<div style="left:304px;top:709px;width:1px;height:22px;background:#dedede"></div>
<div class="t" style="left:237px;top:714px;font-size:12.5px;line-height:12.5px;transform:scaleX(0.9167999999999998);transform-origin:0 0;color:#424242">97151</div>
<div style="left:357px;top:709px;width:1px;height:22px;background:#dedede"></div>
<div style="left:409px;top:709px;width:1px;height:22px;background:#dedede"></div>
<div style="left:462px;top:709px;width:1px;height:22px;background:#dedede"></div>
<div style="left:515px;top:709px;width:1px;height:22px;background:#dedede"></div>
<div style="left:593px;top:709px;width:1px;height:22px;background:#dedede"></div>
<div class="t" style="right:415px;top:714px;font-size:12.5px;line-height:12.5px;transform:scaleX(0.9164310684857491);transform-origin:100% 0;color:#424242">$112.50</div>
<div style="left:712px;top:709px;width:1px;height:22px;background:#dedede"></div>
<div class="t" style="right:296px;top:714px;font-size:12.5px;line-height:12.5px;transform:scaleX(0.9163639846743294);transform-origin:100% 0;color:#424242">$75.00</div>
<div style="left:777px;top:709px;width:1px;height:22px;background:#dedede"></div>
<div class="t" style="right:231px;top:714px;font-size:12.5px;line-height:12.5px;transform:scaleX(0.9163639846743294);transform-origin:100% 0;color:#424242">$75.00</div>
<div style="left:858px;top:709px;width:1px;height:22px;background:#dedede"></div>
<div class="t" style="right:150px;top:714px;font-size:12.5px;line-height:12.5px;transform:scaleX(0.9162670829268292);transform-origin:100% 0;color:#424242">$0.00</div>
<div style="left:978px;top:709px;width:1px;height:22px;background:#dedede"></div>
<div class="t" style="right:30px;top:714px;font-size:12.5px;line-height:12.5px;transform:scaleX(0.9162670829268292);transform-origin:100% 0;color:#424242">$0.00</div>
<div style="left:25px;top:752px;width:954px;height:1px;background:#dedede"></div>
<div style="left:133px;top:731px;width:1px;height:22px;background:#dedede"></div>
<div class="t" style="left:29px;top:736px;font-size:12.5px;line-height:12.5px;transform:scaleX(0.8813096738772372);transform-origin:0 0;color:#424242">Deschanel, Miranda</div>
<div style="left:232px;top:731px;width:1px;height:22px;background:#dedede"></div>
<div class="t" style="left:138px;top:736px;font-size:12.5px;line-height:12.5px;transform:scaleX(0.9955977922729552);transform-origin:0 0;color:#424242">6/7/2019</div>
<div style="left:304px;top:731px;width:1px;height:22px;background:#dedede"></div>
<div class="t" style="left:237px;top:736px;font-size:12.5px;line-height:12.5px;transform:scaleX(0.9167999999999998);transform-origin:0 0;color:#424242">97156</div>
<div style="left:357px;top:731px;width:1px;height:22px;background:#dedede"></div>
<div style="left:409px;top:731px;width:1px;height:22px;background:#dedede"></div>
<div style="left:462px;top:731px;width:1px;height:22px;background:#dedede"></div>
<div style="left:515px;top:731px;width:1px;height:22px;background:#dedede"></div>
<div style="left:593px;top:731px;width:1px;height:22px;background:#dedede"></div>
<div class="t" style="right:415px;top:736px;font-size:12.5px;line-height:12.5px;transform:scaleX(0.9164310684857491);transform-origin:100% 0;color:#424242">$112.50</div>
<div style="left:712px;top:731px;width:1px;height:22px;background:#dedede"></div>
<div class="t" style="right:296px;top:736px;font-size:12.5px;line-height:12.5px;transform:scaleX(0.9163639846743294);transform-origin:100% 0;color:#424242">$82.50</div>
<div style="left:777px;top:731px;width:1px;height:22px;background:#dedede"></div>
<div class="t" style="right:231px;top:736px;font-size:12.5px;line-height:12.5px;transform:scaleX(0.9163639846743294);transform-origin:100% 0;color:#424242">$82.50</div>
<div style="left:858px;top:731px;width:1px;height:22px;background:#dedede"></div>
<div class="t" style="right:150px;top:736px;font-size:12.5px;line-height:12.5px;transform:scaleX(0.9162670829268292);transform-origin:100% 0;color:#424242">$0.00</div>
<div style="left:978px;top:731px;width:1px;height:22px;background:#dedede"></div>
<div class="t" style="right:30px;top:736px;font-size:12.5px;line-height:12.5px;transform:scaleX(0.9162670829268292);transform-origin:100% 0;color:#424242">$0.00</div>
<svg style="left:13px;top:628px" width="5" height="8" viewBox="0 0 5 8"><path d="M0 0 L4.5 4 L0 8 Z" fill="#555"/></svg>
<div style="left:1px;top:771px;width:1004px;height:1px;background:#d4d4d4"></div>
<div style="left:1002px;top:784px;width:2px;height:2px;background:#707070"></div>
<div style="left:999px;top:787px;width:2px;height:2px;background:#707070"></div>
<div style="left:1002px;top:787px;width:2px;height:2px;background:#707070"></div>
<div style="left:996px;top:790px;width:2px;height:2px;background:#707070"></div>
<div style="left:999px;top:790px;width:2px;height:2px;background:#707070"></div>
<div style="left:1002px;top:790px;width:2px;height:2px;background:#707070"></div>
<div style="left:549px;top:262px;width:135px;height:33px;border:4px solid #ff0000;box-sizing:border-box"></div>
<div style="left:907px;top:262px;width:98px;height:33px;border:4px solid #ff0000;box-sizing:border-box"></div>
<div style="left:23px;top:355px;width:735px;height:31px;border:4px solid #ff0000;box-sizing:border-box"></div>
<div style="left:24px;top:618px;width:959px;height:144px;border:4px solid #ff0000;box-sizing:border-box"></div>
</body></html>
